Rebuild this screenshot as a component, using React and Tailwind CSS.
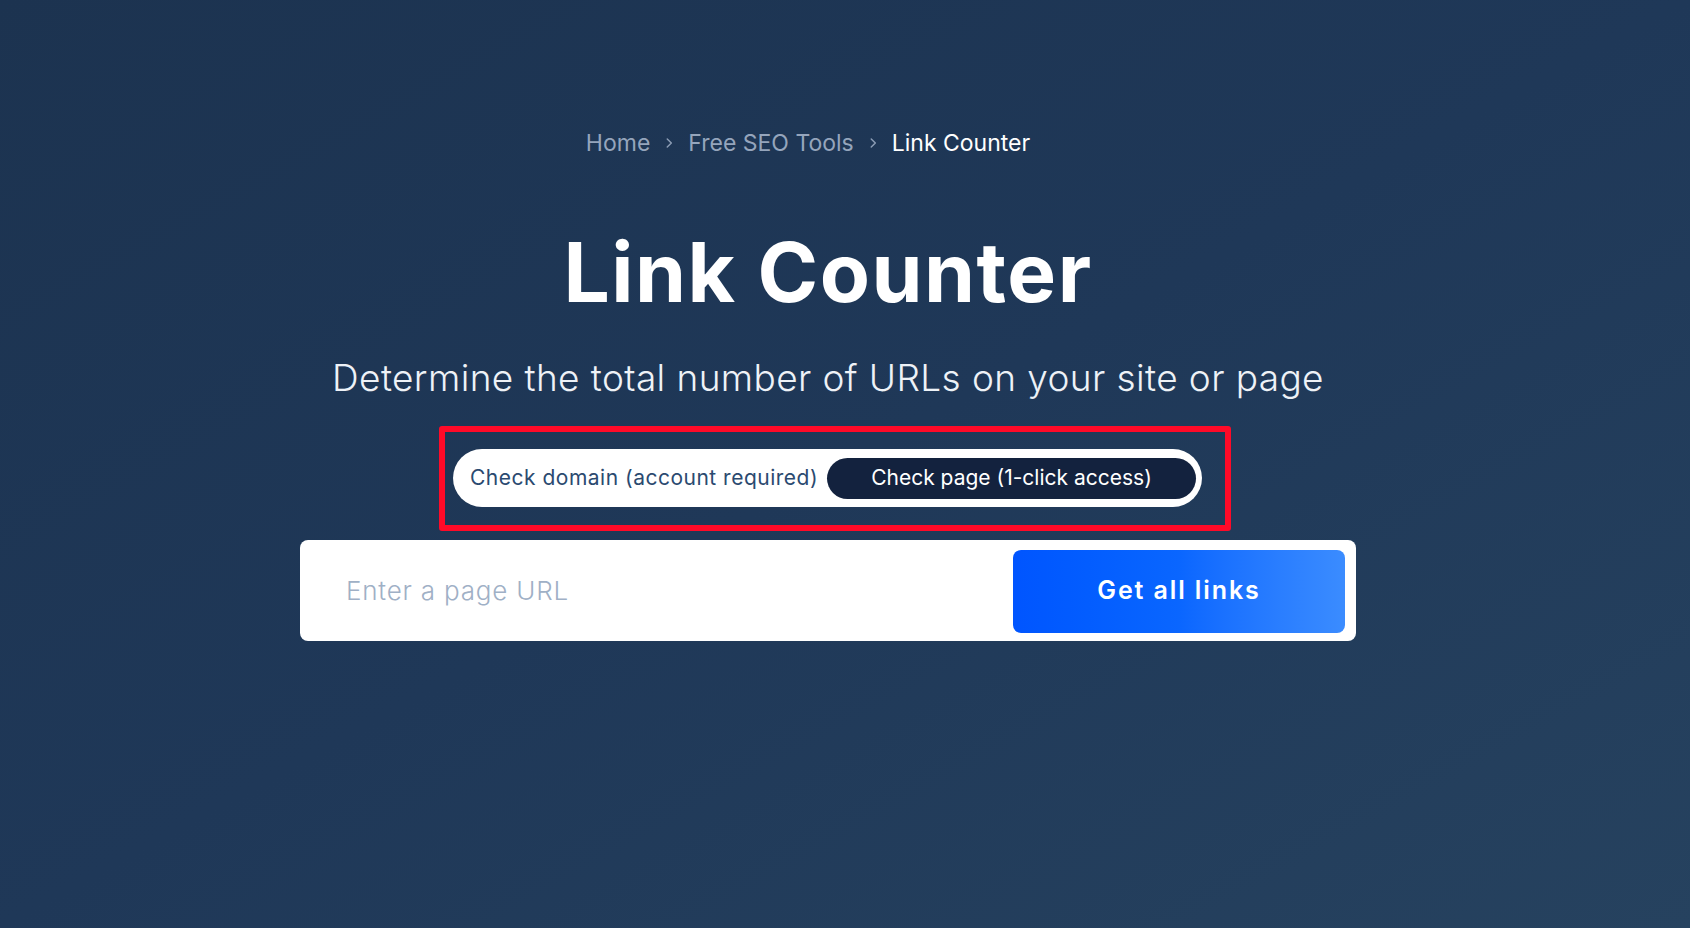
import { useState } from 'react';

const Chevron = () => (
  <svg className="h-[14px] w-[14px] text-[#8c9db5]" viewBox="0 0 24 24" fill="none" stroke="currentColor" strokeWidth={2.5} strokeLinecap="round" strokeLinejoin="round">
    <path d="M9 5l7 7-7 7" />
  </svg>
);

export default function App() {
  const [mode, setMode] = useState('page');
  const [url, setUrl] = useState('');

  return (
    <div
      className="min-h-[928px] w-full bg-gradient-to-br from-[#1c3350] via-[#1f3858] to-[#26425f] pr-[34px] text-white"
      style={{ fontFamily: 'Inter, "Noto Sans", sans-serif' }}
    >
      <div className="flex flex-col items-center pt-[126px]">
        {/* Breadcrumbs */}
        <nav className="mr-[40px] flex items-center gap-[12px] text-[23px] leading-[34px]">
          <a href="#" className="text-[#95a5bc]">Home</a>
          <Chevron />
          <a href="#" className="text-[#95a5bc]">Free SEO Tools</a>
          <Chevron />
          <span className="text-white">Link Counter</span>
        </nav>

        <h1 className="mt-[65px] text-[82px] font-bold leading-[96px] tracking-[1.5px]">Link Counter</h1>

        <p className="mt-[33px] text-[37px] font-light leading-[48px] tracking-[0.4px] text-[#eef2f7]">
          Determine the total number of URLs on your site or page
        </p>

        {/* Mode switch */}
        <div className="ml-[14px] mt-[24px] rounded-[3px] border-[6px] border-[#ff0a28] pb-[18px] pl-[8px] pr-[23px] pt-[17px]">
          <div className="flex h-[58px] w-[749px] items-center rounded-full bg-white pl-[17px] pr-[6px]">
            <button
              onClick={() => setMode('domain')}
              className={
                mode === 'domain'
                  ? 'h-[41px] shrink-0 whitespace-nowrap rounded-full bg-[#13223e] px-[20px] text-[21px] tracking-[0.5px] text-white'
                  : 'h-[41px] shrink-0 whitespace-nowrap text-[21px] tracking-[0.5px] text-[#2b4a70]'
              }
            >
              Check domain (account required)
            </button>
            <button
              onClick={() => setMode('page')}
              className={
                mode === 'page'
                  ? 'ml-auto h-[41px] w-[369px] shrink-0 whitespace-nowrap rounded-full bg-[#13223e] text-[21px] text-white'
                  : 'ml-auto h-[41px] w-[369px] shrink-0 whitespace-nowrap text-[21px] text-[#2b4a70]'
              }
            >
              Check page (1-click access)
            </button>
          </div>
        </div>

        {/* URL form */}
        <form
          onSubmit={(e) => e.preventDefault()}
          className="mt-[9px] flex h-[101px] w-[1056px] items-center rounded-[8px] bg-white pb-[8px] pl-[46px] pr-[11px] pt-[10px]"
        >
          <input
            value={url}
            onChange={(e) => setUrl(e.target.value)}
            placeholder="Enter a page URL"
            className="mb-[3px] h-full min-w-0 flex-1 bg-transparent text-[26px] font-light tracking-[0.8px] text-[#1c3350] outline-none placeholder:text-[#9fb0c6]"
          />
          <button
            type="submit"
            className="h-[83px] w-[332px] shrink-0 rounded-[8px] bg-gradient-to-r from-[#0055ff] via-[#0a66ff] to-[#3b8cff] pb-[2px] text-[25px] font-semibold tracking-[1.9px] text-white"
          >
            Get all links
          </button>
        </form>
      </div>
    </div>
  );
}
